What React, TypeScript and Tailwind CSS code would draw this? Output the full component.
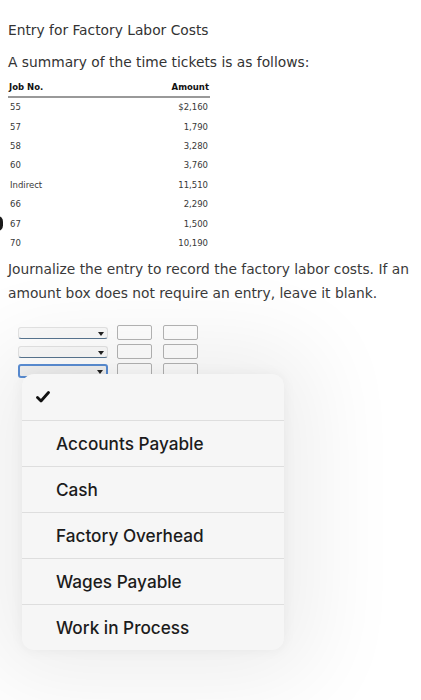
import React from "react";

const rows: [string, string][] = [
  ["55", "$2,160"],
  ["57", "1,790"],
  ["58", "3,280"],
  ["60", "3,760"],
  ["Indirect", "11,510"],
  ["66", "2,290"],
  ["67", "1,500"],
  ["70", "10,190"],
];

const items = ["Accounts Payable", "Cash", "Factory Overhead", "Wages Payable", "Work in Process"];

function Arrow() {
  return (
    <svg width="6" height="4" viewBox="0 0 6 4" className="absolute right-[3px] top-[4px]">
      <path d="M0 0 L6 0 L3 4 Z" fill="#222" />
    </svg>
  );
}

function SelectRow({ focused }: { focused?: boolean }) {
  return (
    <div className="flex items-center gap-[9px] h-[15px]">
      {focused ? (
        <div className="relative w-[90px] h-[14px] rounded-[3px] border-2 border-[#5b8fd6] bg-[#f3f3f3]">
          <Arrow />
        </div>
      ) : (
        <div className="relative w-[90px] h-[12px] rounded-[3px] border border-[#e4e4e4] border-b-[1.5px] border-b-[#587590] bg-[#fafafa]">
          <Arrow />
        </div>
      )}
      <div className="w-[35px] h-[15px] rounded-[2px] border-[1.5px] border-[#b5b5b5] bg-white" />
      <div className="w-[35px] h-[15px] ml-[2px] rounded-[2px] border-[1.5px] border-[#b5b5b5] bg-white" />
    </div>
  );
}

export default function App() {
  return (
    <div className="relative w-[421px] h-[700px] bg-white overflow-hidden" style={{ fontFamily: '"DejaVu Sans", Verdana, sans-serif' }}>
      <div className="absolute left-[-8px] top-[216px] w-[11px] h-[15px] rounded-full bg-[#1a1a1a]" />
      <div className="px-2 pt-[20px] text-[#333]">
        <div className="text-[13.8px] leading-[20px]">Entry for Factory Labor Costs</div>
        <div className="mt-[12px] text-[13.8px] leading-[20px]">A summary of the time tickets is as follows:</div>
        <div className="mt-[7px] w-[202px]">
          <div className="flex justify-between items-center h-[19px] border-b-2 border-[#999] text-[8.5px] font-bold text-[#111] px-[1px]">
            <span>Job No.</span>
            <span>Amount</span>
          </div>
          {rows.map(([a, b]) => (
            <div key={a} className="flex justify-between items-center h-[19.4px] text-[8.5px] text-[#383838] px-[2px]">
              <span>{a}</span>
              <span>{b}</span>
            </div>
          ))}
        </div>
        <div className="mt-[4px] text-[13.8px] leading-[24px] text-[#3a3a3a]">
          Journalize the entry to record the factory labor costs. If an amount box does not require an entry, leave it blank.
        </div>
        <div className="mt-[20px] ml-[10px] flex flex-col gap-[4px]">
          <SelectRow />
          <SelectRow />
          <SelectRow focused />
        </div>
      </div>
      <div
        className="absolute left-[22px] top-[374px] w-[262px] h-[276px] rounded-[12px] bg-[#f6f6f6] shadow-[0_0_14px_rgba(0,0,0,0.05),0_0_90px_30px_rgba(0,0,0,0.07)]"
        style={{ fontFamily: 'Inter, "Noto Sans", sans-serif' }}
      >
        <div className="h-[47px] flex items-center pl-[14px] border-b border-[#dedede]">
          <svg width="14" height="12" viewBox="0 0 14 12">
            <path d="M1.5 6.5 L5 10 L12.5 1.5" fill="none" stroke="#111" strokeWidth="2.8" strokeLinecap="round" strokeLinejoin="round" />
          </svg>
        </div>
        {items.map((t, i) => (
          <div
            key={t}
            className={`h-[46px] flex items-center pl-[34px] text-[17.2px] font-medium text-[#1c1c1c] ${i < items.length - 1 ? "border-b border-[#dedede]" : ""}`}
          >
            {t}
          </div>
        ))}
      </div>
    </div>
  );
}
